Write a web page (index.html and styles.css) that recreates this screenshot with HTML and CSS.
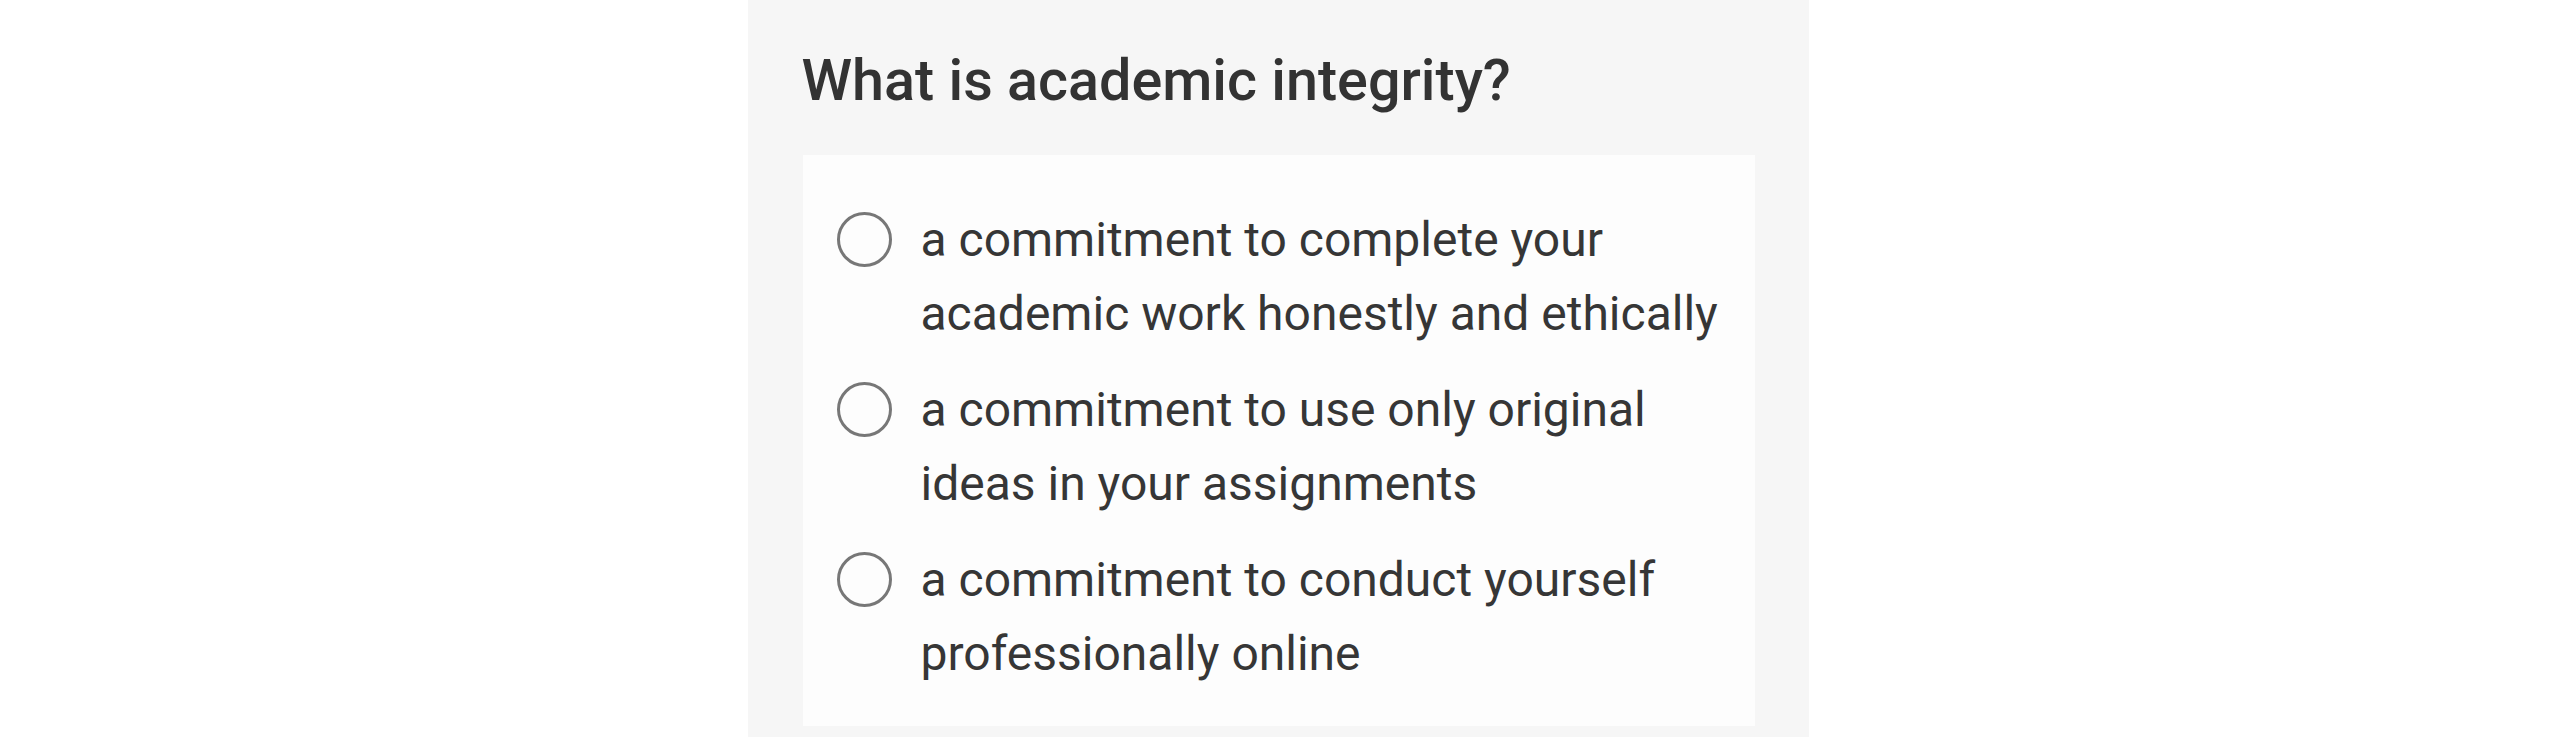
FILE: index.html
```html
<!DOCTYPE html>
<html lang="en">
<head>
<meta charset="utf-8">
<title>Quiz question</title>
<link rel="stylesheet" href="styles.css">
</head>
<body>
<main class="card">
  <h1 class="question">What is academic integrity?</h1>
  <div class="choices">
    <label class="choice">
      <span class="radio"></span>
      <span class="choice-text">a commitment to complete your academic work honestly and ethically</span>
    </label>
    <label class="choice">
      <span class="radio"></span>
      <span class="choice-text">a commitment to use only original ideas in your assignments</span>
    </label>
    <label class="choice">
      <span class="radio"></span>
      <span class="choice-text">a commitment to conduct yourself professionally online</span>
    </label>
  </div>
</main>
</body>
</html>
```

FILE: styles.css
```css
html, body {
  margin: 0;
  padding: 0;
  background: #ffffff;
}

body {
  font-family: Roboto, "Noto Sans", "Liberation Sans", sans-serif;
  color: #333333;
}

.card {
  box-sizing: border-box;
  width: 1061px;
  min-height: 737px;
  margin: 0 auto;
  padding: 46px 54px 11px 55px;
  background: #f6f6f6;
}

.question {
  margin: 0 0 39px -1px;
  font-size: 57.5px;
  font-weight: 500;
  line-height: 70px;
  color: #333333;
}

.choices {
  background: #fdfdfd;
  padding: 48px 10px 35px 34px;
  display: flex;
  flex-direction: column;
  gap: 22px;
}

.choice {
  display: flex;
  align-items: flex-start;
  gap: 29px;
}

.radio {
  flex: none;
  box-sizing: border-box;
  width: 55px;
  height: 55px;
  margin-top: 9px;
  border: 3px solid #777777;
  border-radius: 50%;
}

.choice-text {
  flex: 1;
  font-size: 48px;
  line-height: 74px;
  color: #363636;
}
```
